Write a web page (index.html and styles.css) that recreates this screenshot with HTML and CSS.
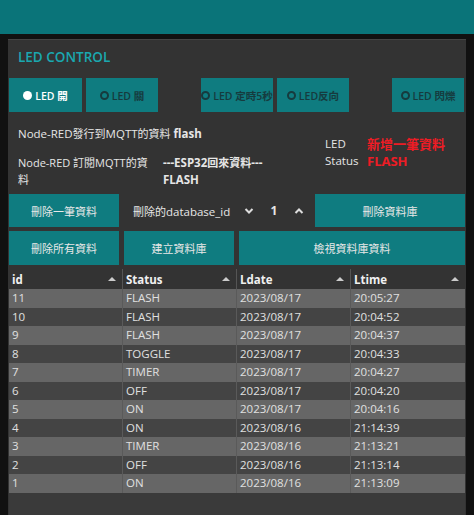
FILE: index.html
```html
<!DOCTYPE html>
<html>
<head>
<meta charset="utf-8">
<link rel="stylesheet" href="styles.css">
</head>
<body>
<div class="topbar"></div>
<div class="page">
  <div class="card">
    <div class="title">LED CONTROL</div>
    <div class="btnrow">
      <div class="led-btn on"><span class="dot"></span>LED 開</div>
      <div class="led-btn"><span class="ring"></span>LED 關</div>
      <div class="spacer"></div>
      <div class="led-btn"><span class="ring"></span>LED 定時5秒</div>
      <div class="led-btn"><span class="ring"></span>LED反向</div>
      <div class="spacer"></div>
      <div class="led-btn"><span class="ring"></span>LED 閃爍</div>
    </div>
    <div class="info">
      <div class="info-left">
        <div class="line1">Node-RED<span class="cj">發行到</span>MQTT<span class="cj">的資料</span> <b>flash</b></div>
        <div class="line2">
          <div class="lbl">Node-RED 訂閱MQTT的資料</div>
          <div class="val">---ESP32<span class="cj">回來資料</span>---<br>FLASH</div>
        </div>
      </div>
      <div class="info-right">
        <div class="st-lbl">LED<br>Status</div>
        <div class="st-val">新增一筆資料<br>FLASH</div>
      </div>
    </div>
    <div class="row2">
      <div class="btn w110">刪除一筆資料</div>
      <div class="numlabel"><span class="cj">刪除的</span>database_id</div>
      <div class="num">
        <svg class="chev" width="10" height="8" viewBox="0 0 10 8"><path d="M1.5 2 L5 5.5 L8.5 2" fill="none" stroke="#ddd" stroke-width="2"/></svg>
        <span class="numval">1</span>
        <svg class="chev" width="10" height="8" viewBox="0 0 10 8"><path d="M1.5 6 L5 2.5 L8.5 6" fill="none" stroke="#ddd" stroke-width="2"/></svg>
      </div>
      <div class="btn grow">刪除資料庫</div>
    </div>
    <div class="row3">
      <div class="btn w110">刪除所有資料</div>
      <div class="btn w110">建立資料庫</div>
      <div class="btn grow">檢視資料庫資料</div>
    </div>
    <div class="tablewrap">
      <div class="thead">
        <div class="th">id<span class="sort"></span></div>
        <div class="th">Status<span class="sort"></span></div>
        <div class="th">Ldate<span class="sort"></span></div>
        <div class="th">Ltime<span class="sort"></span></div>
      </div>
      <div class="tr"><div>11</div><div>FLASH</div><div>2023/08/17</div><div>20:05:27</div></div>
      <div class="tr"><div>10</div><div>FLASH</div><div>2023/08/17</div><div>20:04:52</div></div>
      <div class="tr"><div>9</div><div>FLASH</div><div>2023/08/17</div><div>20:04:37</div></div>
      <div class="tr"><div>8</div><div>TOGGLE</div><div>2023/08/17</div><div>20:04:33</div></div>
      <div class="tr"><div>7</div><div>TIMER</div><div>2023/08/17</div><div>20:04:27</div></div>
      <div class="tr"><div>6</div><div>OFF</div><div>2023/08/17</div><div>20:04:20</div></div>
      <div class="tr"><div>5</div><div>ON</div><div>2023/08/17</div><div>20:04:16</div></div>
      <div class="tr"><div>4</div><div>ON</div><div>2023/08/16</div><div>21:14:39</div></div>
      <div class="tr"><div>3</div><div>TIMER</div><div>2023/08/16</div><div>21:13:21</div></div>
      <div class="tr"><div>2</div><div>OFF</div><div>2023/08/16</div><div>21:13:14</div></div>
      <div class="tr"><div>1</div><div>ON</div><div>2023/08/16</div><div>21:13:09</div></div>
    </div>
  </div>
</div>
</body>
</html>
```

FILE: styles.css
```css
* { box-sizing: border-box; }
html, body { margin: 0; padding: 0; }
body {
  background: #111;
  font-family: "Open Sans", "Noto Sans CJK TC", sans-serif;
  font-size: 11.5px;
  color: #e6e6e6;
  height: 515px;
  overflow: hidden;
}
.cj { font-size: 11px; }
.topbar {
  height: 34px;
  background: #0a7479;
}
.page {
  padding: 5px 8px 0 8px;
}
.card {
  background: #333;
  border-top: 1px solid #444;
  padding: 0 1px;
  height: 480px;
}
.title {
  padding: 8px 0 0 9px;
  line-height: 18px;
  height: 26px;
  font-size: 13.5px;
  font-weight: 600;
  color: #1aa8b0;
}
.btnrow {
  display: flex;
  gap: 4px;
  margin-top: 12px;
  height: 34px;
}
.led-btn {
  width: 72px;
  height: 34px;
  background: #0f7c80;
  color: #163b3e;
  display: flex;
  align-items: center;
  justify-content: center;
  font-size: 10.5px;
  font-weight: 600;
  white-space: nowrap;
}
.led-btn.on { color: #fff; }
.led-btn:first-child { width: 73px; }
.spacer { width: 35px; }
.dot {
  width: 9px; height: 9px; border-radius: 50%;
  background: #fff; margin-right: 3px;
}
.ring {
  width: 9px; height: 9px; border-radius: 50%;
  border: 2px solid #163b3e; margin-right: 3px;
}
.info {
  display: flex;
  margin-top: 13px;
  height: 69px;
}
.info-left {
  width: 316px;
  padding-left: 9px;
}
.line1 { line-height: 18px; }
.line1 b { font-weight: 700; }
.line2 {
  display: flex;
  margin-top: 11px;
  line-height: 17px;
}
.lbl { width: 136px; margin-right: 9px; font-size: 11px; }
.val { font-weight: 700; white-space: nowrap; }
.info-right {
  display: flex;
  padding-top: 11px;
  line-height: 16.5px;
}
.st-lbl { width: 42px; }
.st-val { color: #ee1c25; font-weight: 700; font-size: 13px; }
.row2 {
  display: flex;
  align-items: center;
  height: 33px;
}
.btn {
  background: #0f7c80;
  color: #e8e8e8;
  height: 100%;
  display: flex;
  align-items: center;
  justify-content: center;
  font-size: 11px;
}
.w110 { width: 110px; }
.grow { flex: 1; }
.numlabel {
  margin-left: 14px;
  width: 110px;
  white-space: nowrap;
}
.num {
  width: 72px;
  display: flex;
  align-items: center;
  padding-left: 1px;
}
.chev { display: block; }
.numval { width: 40px; text-align: center; font-weight: 700; font-size: 12px; }
.row3 {
  display: flex;
  gap: 5px;
  height: 34px;
  margin-top: 4px;
}
.tablewrap {
  margin-top: 4px;
  background: #3a3a3a;
  height: 250px;
}
.thead {
  display: grid;
  grid-template-columns: 114px 114px 114px 114px;
  height: 20px;
  background: #333;
}
.th {
  display: flex;
  align-items: center;
  justify-content: space-between;
  padding: 0 6px 0 3px;
  font-weight: 700;
  color: #f0f0f0;
  border-right: 1px solid #555;
}
.th:last-child { border-right: none; }
.sort {
  width: 0; height: 0;
  border-left: 4px solid transparent;
  border-right: 4px solid transparent;
  border-bottom: 4px solid #ccc;
}
.tr {
  display: grid;
  grid-template-columns: 114px 114px 114px 114px;
  height: 18.5px;
  line-height: 18.5px;
  background: #444;
  color: #e0e0e0;
}
.tr:nth-child(even) { background: #666; }
.tr > div {
  padding-left: 3px;
  border-right: 1px solid #5a5a5a;
}
.tr > div:last-child { border-right: none; }
```
